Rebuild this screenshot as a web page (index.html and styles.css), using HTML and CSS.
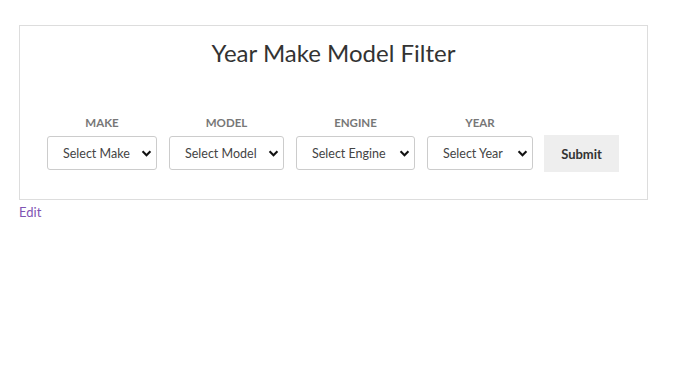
FILE: index.html
```html
<!DOCTYPE html>
<html lang="en">
<head>
    <meta charset="UTF-8">
    <meta name="viewport" content="width=device-width, initial-scale=1.0">
    <title>Year Make Model Filter</title>
    <link rel="stylesheet" href="styles.css">
</head>
<body>
    <div class="ymm-widget">
        <h2 class="ymm-title">Year Make Model Filter</h2>

        <form class="ymm-form" onsubmit="return false;">
            <div class="ymm-field">
                <label for="ymmMake">Make</label>
                <div class="select-wrap">
                    <select id="ymmMake" class="w-make">
                        <option>Select Make</option>
                    </select>
                    <svg class="chevron" viewBox="0 0 12 8" aria-hidden="true"><path d="M1.5 1.5 6 6l4.5-4.5" /></svg>
                </div>
            </div>
            <div class="ymm-field">
                <label for="ymmModel">Model</label>
                <div class="select-wrap">
                    <select id="ymmModel" class="w-model">
                        <option>Select Model</option>
                    </select>
                    <svg class="chevron" viewBox="0 0 12 8" aria-hidden="true"><path d="M1.5 1.5 6 6l4.5-4.5" /></svg>
                </div>
            </div>
            <div class="ymm-field">
                <label for="ymmEngine">Engine</label>
                <div class="select-wrap">
                    <select id="ymmEngine" class="w-engine">
                        <option>Select Engine</option>
                    </select>
                    <svg class="chevron" viewBox="0 0 12 8" aria-hidden="true"><path d="M1.5 1.5 6 6l4.5-4.5" /></svg>
                </div>
            </div>
            <div class="ymm-field">
                <label for="ymmYear">Year</label>
                <div class="select-wrap">
                    <select id="ymmYear" class="w-year">
                        <option>Select Year</option>
                    </select>
                    <svg class="chevron" viewBox="0 0 12 8" aria-hidden="true"><path d="M1.5 1.5 6 6l4.5-4.5" /></svg>
                </div>
            </div>
            <button type="submit" class="btn-submit">Submit</button>
        </form>
    </div>
    <a href="#" class="edit-link">Edit</a>
</body>
</html>
```

FILE: styles.css
```css
* {
    margin: 0;
    padding: 0;
    box-sizing: border-box;
}

body {
    font-family: Lato, 'Open Sans', sans-serif;
    color: #333;
    background: #fff;
    padding: 25px 26px 0 19px;
}

.ymm-widget {
    width: 629px;
    height: 175px;
    border: 1px solid #ddd;
    padding-top: 10px;
}

.ymm-title {
    font-size: 24px;
    font-weight: 400;
    line-height: 34px;
    text-align: center;
    color: #333;
}

.ymm-form {
    display: flex;
    justify-content: center;
    align-items: flex-end;
    gap: 12px;
    margin-top: 46px;
    padding-right: 1px;
}

.ymm-field {
    display: flex;
    flex-direction: column;
    align-items: center;
    margin-bottom: 2px;
}

.ymm-field label {
    font-size: 11.5px;
    font-weight: 700;
    text-transform: uppercase;
    color: #777;
    line-height: 14px;
    margin-bottom: 6px;
}

.select-wrap {
    position: relative;
}

.select-wrap select {
    appearance: none;
    -webkit-appearance: none;
    display: block;
    height: 34px;
    border: 1px solid #ccc;
    border-radius: 3px;
    background: #fff;
    font-family: inherit;
    font-size: 12.5px;
    color: #444;
    padding: 0 18px 0 15px;
}

.w-make { width: 110px; }
.w-model { width: 115px; }
.w-engine { width: 119px; }
.w-year { width: 106px; }

.chevron {
    position: absolute;
    right: 5px;
    top: 14px;
    width: 11px;
    height: 7px;
    fill: none;
    stroke: #111;
    stroke-width: 2.4;
    pointer-events: none;
}

.btn-submit {
    width: 75px;
    height: 37px;
    margin-left: -1px;
    border: none;
    background: #eee;
    color: #333;
    font-family: inherit;
    font-size: 13px;
    font-weight: 700;
    cursor: pointer;
}

.edit-link {
    display: inline-block;
    margin-top: 4px;
    font-size: 13px;
    color: #7f54b3;
    text-decoration: none;
}
```
